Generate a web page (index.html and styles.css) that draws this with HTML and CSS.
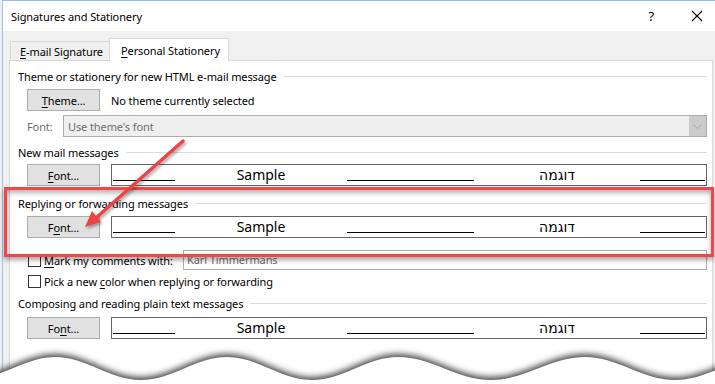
FILE: index.html
```html
<!DOCTYPE html>
<html>
<head>
<meta charset="utf-8">
<link rel="stylesheet" href="styles.css">
</head>
<body>
<div class="window">
  <div class="titlebar">
    <span class="title">Signatures and Stationery</span>
    <span class="help">?</span>
    <svg class="close" width="12" height="12" viewBox="0 0 12 12"><path d="M1 1 L11 11 M11 1 L1 11" stroke="#000" stroke-width="1.1" fill="none"/></svg>
  </div>
  <div class="tabs">
    <div class="tab"><u>E</u>-mail Signature</div>
    <div class="tab active"><u>P</u>ersonal Stationery</div>
  </div>
  <div class="panel">
    <div class="legend l1">Theme or stationery for new HTML e-mail message</div>
    <div class="row theme-row">
      <div class="btn"><u>T</u>heme...</div>
      <span class="note">No theme currently selected</span>
    </div>
    <div class="row font-row">
      <span class="lbl">Font:</span>
      <div class="select">
        <span class="select-text">Use theme's font</span>
        <span class="select-btn"><svg width="9" height="5" viewBox="0 0 9 5"><path d="M0.5 0.5 L4.5 4.5 L8.5 0.5" stroke="#a8a8a8" fill="none"/></svg></span>
      </div>
    </div>
    <div class="legend l2">New mail messages</div>
    <div class="row sample-row r2">
      <div class="btn"><u>F</u>ont...</div>
      <div class="sample">
        <div class="half left"><span class="ul a"></span><span class="stext">Sample</span><span class="ul b"></span></div>
        <div class="half right"><span class="ul c"></span><span class="stext" dir="rtl">דוגמה</span><span class="ul d"></span></div>
      </div>
    </div>
    <div class="legend l3">Replying or forwarding messages</div>
    <div class="row sample-row r3">
      <div class="btn">F<u>o</u>nt...</div>
      <div class="sample">
        <div class="half left"><span class="ul a"></span><span class="stext">Sample</span><span class="ul b"></span></div>
        <div class="half right"><span class="ul c"></span><span class="stext" dir="rtl">דוגמה</span><span class="ul d"></span></div>
      </div>
    </div>
    <div class="row check-row c1">
      <span class="box"></span>
      <span class="clabel fixed"><u>M</u>ark my comments with:</span>
      <div class="textin">Karl Timmermans</div>
    </div>
    <div class="row check-row c2">
      <span class="box"></span>
      <span class="clabel">Pick a new <u>c</u>olor when replying or forwarding</span>
    </div>
    <div class="legend l4">Composing and reading plain text messages</div>
    <div class="row sample-row r4">
      <div class="btn">Fo<u>n</u>t...</div>
      <div class="sample">
        <div class="half left"><span class="ul a"></span><span class="stext">Sample</span><span class="ul b"></span></div>
        <div class="half right"><span class="ul c"></span><span class="stext" dir="rtl">דוגמה</span><span class="ul d"></span></div>
      </div>
    </div>
  </div>
</div>

<div class="redbox"></div>

<svg class="arrow" width="715" height="384" viewBox="0 0 715 384">
  <defs>
    <filter id="sh" x="-20%" y="-20%" width="140%" height="140%">
      <feDropShadow dx="1.5" dy="2" stdDeviation="1.5" flood-color="#000" flood-opacity="0.35"/>
    </filter>
  </defs>
  <g filter="url(#sh)">
    <line x1="183" y1="141" x2="97" y2="217" stroke="#ea4444" stroke-width="3.5" stroke-linecap="round"/>
    <polygon points="85,227 101,222 92,211" fill="#ea4444"/>
  </g>
</svg>

<svg class="wave" width="715" height="44" viewBox="0 340 715 44">
  <defs>
    <filter id="blur" x="-10%" y="-50%" width="120%" height="200%">
      <feGaussianBlur stdDeviation="3"/>
    </filter>
  </defs>
  <path transform="translate(0,-3)" filter="url(#blur)" fill="#4a4a4a" d="M -117 357 C -86 357, -62 380, -31 380 C 0 380, 24 357, 55 357 C 86 357, 110 380, 141 380 C 172 380, 196 357, 227 357 C 258 357, 281 380, 312 380 C 343 380, 367 357, 398 357 C 432 357, 457 380, 491 380 C 525 380, 551 357, 585 357 C 617 357, 643 380, 675 380 C 707 380, 733 357, 765 357 L 765 400 L -117 400 Z"/>
  <path fill="#fff" d="M -117 357 C -86 357, -62 380, -31 380 C 0 380, 24 357, 55 357 C 86 357, 110 380, 141 380 C 172 380, 196 357, 227 357 C 258 357, 281 380, 312 380 C 343 380, 367 357, 398 357 C 432 357, 457 380, 491 380 C 525 380, 551 357, 585 357 C 617 357, 643 380, 675 380 C 707 380, 733 357, 765 357 L 765 400 L -117 400 Z"/>
</svg>
</body>
</html>
```
FILE: styles.css
```css
html, body {
  margin: 0;
  padding: 0;
}
body {
  width: 715px;
  height: 384px;
  overflow: hidden;
  position: relative;
  background: #f0f0f0;
  font-family: "Noto Sans", "DejaVu Sans", sans-serif;
  font-size: 11px;
  letter-spacing: -0.1px;
  color: #000;
}
u { text-decoration: underline; text-underline-offset: 2px; }

.window {
  margin-left: 2px;
  height: 384px;
  background: #f0f0f0;
  border-left: 1px solid #9ec4ea;
  border-top: 1px solid #8fbde9;
  box-sizing: border-box;
}
.titlebar {
  height: 30px;
  background: #fff;
  display: flex;
  align-items: center;
  padding-left: 8px;
}
.title { font-size: 11px; flex: 1; }
.help { font-size: 13px; margin-right: 37px; }
.close { margin-right: 12px; }

.tabs {
  height: 29px;
  display: flex;
  align-items: flex-end;
  padding-left: 7px;
}
.tab {
  height: 19px;
  box-sizing: border-box;
  border: 1px solid #d9d9d9;
  border-bottom: none;
  border-right: none;
  background: #f0f0f0;
  padding: 1px 0 0 9px;
  width: 99px;
  line-height: 17px;
  white-space: nowrap;
}
.tab.active {
  height: 23px;
  width: 120px;
  background: #fff;
  border-right: 1px solid #d9d9d9;
  padding: 3px 0 0 11px;
  margin-bottom: -1px;
  position: relative;
  z-index: 1;
}

.panel {
  margin-left: 6px;
  width: 704px;
  height: 330px;
  box-sizing: border-box;
  background: #fff;
  border: 1px solid #d9d9d9;
  padding: 0 5px 0 8px;
}

.legend {
  display: flex;
  align-items: center;
  height: 16px;
  white-space: nowrap;
}
.legend::after {
  content: "";
  flex: 1;
  border-top: 1px solid #dcdcdc;
  margin-left: 7px;
  margin-top: 1px;
}
.l1 { margin-top: 7px; }
.l2 { margin-top: 7px; }
.l3 { margin-top: 9px; }
.l4 { margin-top: 5px; }

.row {
  display: flex;
  align-items: center;
  padding-left: 9px;
}
.theme-row { margin-top: 5px; height: 22px; }
.font-row { margin-top: 4px; height: 22px; }
.r2 { margin-top: 4px; height: 22px; }
.r3 { margin-top: 5px; height: 22px; }
.r4 { margin-top: 6px; height: 22px; }
.c1 { margin-top: 12px; height: 20px; }
.c2 { margin-top: 2px; height: 18px; }

.btn {
  width: 73px;
  height: 22px;
  box-sizing: border-box;
  background: #e1e1e1;
  border: 1px solid #adadad;
  display: flex;
  align-items: center;
  justify-content: center;
  flex-shrink: 0;
}
.note { margin-left: 11px; }

.lbl { width: 36px; color: #6d6d6d; }
.select {
  flex: 1;
  height: 22px;
  box-sizing: border-box;
  border: 1px solid #adadad;
  background: #efefef;
  display: flex;
  align-items: center;
}
.select-text { flex: 1; color: #6d6d6d; padding-left: 4px; }
.select-btn {
  width: 17px;
  height: 20px;
  background: #cccccc;
  display: flex;
  align-items: center;
  justify-content: center;
}

.sample {
  flex: 1;
  margin-left: 11px;
  height: 22px;
  box-sizing: border-box;
  border: 1px solid #646464;
  display: flex;
  padding: 0 1px;
}
.half {
  flex: 1;
  display: flex;
  align-items: flex-end;
}
.ul {
  height: 0;
  border-bottom: 1px solid #000;
  margin-bottom: 4px;
  flex-shrink: 0;
}
.ul.a { width: 62px; }
.ul.b { width: 62px; }
.ul.c { width: 65px; }
.ul.d { width: 65px; }
.stext {
  flex: 1;
  text-align: center;
  font-size: 14px;
  letter-spacing: 0;
  line-height: 20px;
}

.box {
  width: 13px;
  height: 13px;
  box-sizing: border-box;
  border: 1px solid #333;
  background: #fff;
  margin-left: 1px;
  flex-shrink: 0;
}
.clabel { margin-left: 3px; white-space: nowrap; }
.clabel.fixed { width: 129px; flex-shrink: 0; }
.textin {
  margin-left: 10px;
  flex: 1;
  height: 20px;
  box-sizing: border-box;
  border: 1px solid #adadad;
  color: #6d6d6d;
  padding-left: 3px;
  line-height: 18px;
}

.redbox {
  position: absolute;
  left: 4px;
  top: 187px;
  width: 710px;
  height: 70px;
  box-sizing: border-box;
  border: 3px solid #f0474a;
  box-shadow: 0 3px 5px rgba(0,0,0,0.35), inset 0 3px 5px rgba(0,0,0,0.3);
}

.arrow {
  position: absolute;
  left: 0;
  top: 0;
  pointer-events: none;
}
.wave {
  position: absolute;
  left: 0;
  top: 340px;
}
```
